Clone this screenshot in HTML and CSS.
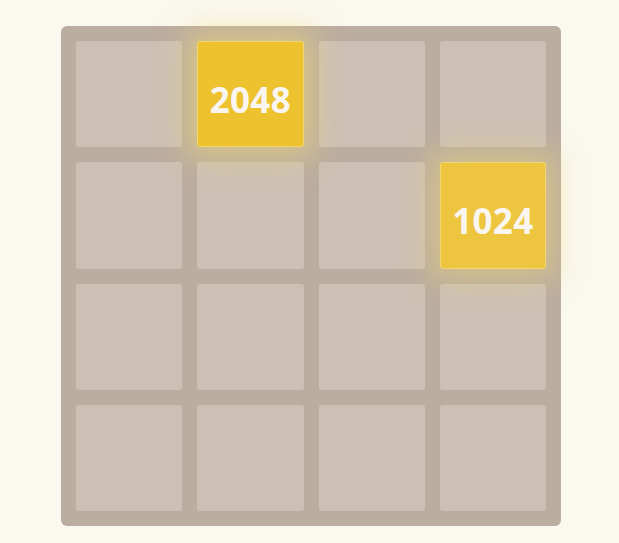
FILE: index.html
```html
<!DOCTYPE html>
<html lang="en">
<head>
    <meta charset="UTF-8">
    <meta name="viewport" content="width=device-width, initial-scale=1.0">
    <title>2048</title>
    <link rel="stylesheet" href="styles.css">
</head>
<body>
    <div class="board">
        <div class="cell"></div>
        <div class="cell tile tile-2048">2048</div>
        <div class="cell"></div>
        <div class="cell"></div>

        <div class="cell"></div>
        <div class="cell"></div>
        <div class="cell"></div>
        <div class="cell tile tile-1024">1024</div>

        <div class="cell"></div>
        <div class="cell"></div>
        <div class="cell"></div>
        <div class="cell"></div>

        <div class="cell"></div>
        <div class="cell"></div>
        <div class="cell"></div>
        <div class="cell"></div>
    </div>
</body>
</html>
```

FILE: styles.css
```css
html, body {
    margin: 0;
    background: #faf8ef;
}
body {
    padding: 26px 0 0 61px;
    font-family: "Open Sans", "Liberation Sans", sans-serif;
}
.board {
    width: 500px;
    height: 500px;
    box-sizing: border-box;
    padding: 15px;
    background: #bbada0;
    border-radius: 6px;
    display: grid;
    grid-template-columns: repeat(4, 1fr);
    grid-template-rows: repeat(4, 1fr);
    gap: 15px;
}
.cell {
    background: rgba(238, 228, 218, 0.35);
    border-radius: 3px;
}
/* tiles sit above the empty cells so their glow spills over neighbours */
.tile {
    position: relative;
    z-index: 1;
    display: flex;
    align-items: center;
    justify-content: center;
    padding-top: 10px;
    box-sizing: border-box;
    color: #f9f6f2;
    font-weight: 700;
    font-size: 35px;
    letter-spacing: 0.3px;
}
.tile-2048 {
    background: #edc22e;
    box-shadow: 0 0 30px 10px rgba(243, 215, 116, 0.56), inset 0 0 0 1px rgba(255, 255, 255, 0.33);
}
.tile-1024 {
    background: #edc53f;
    box-shadow: 0 0 30px 10px rgba(243, 215, 116, 0.48), inset 0 0 0 1px rgba(255, 255, 255, 0.29);
}
```
